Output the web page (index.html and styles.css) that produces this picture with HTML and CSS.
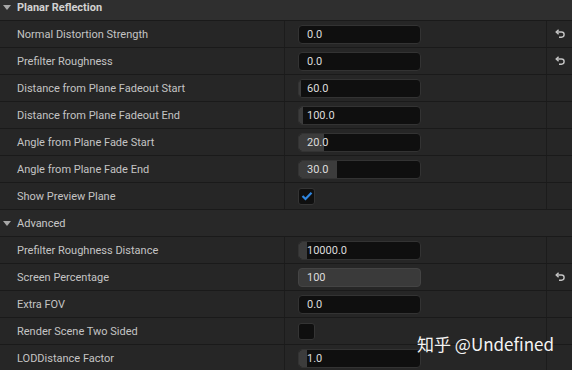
FILE: index.html
```html
<!DOCTYPE html>
<html lang="en">
<head>
  <meta charset="UTF-8">
  <title>Planar Reflection</title>
  <link rel="stylesheet" href="styles.css">
</head>
<body>
  <div class="panel">
    <div class="group main"><span class="arrow"></span>Planar Reflection</div>

    <div class="row">
      <div class="label">Normal Distortion Strength</div>
      <div class="value"><div class="field"><span>0.0</span></div></div>
      <div class="reset"><svg width="12" height="10" viewBox="0 0 12 10"><path d="M2.5 3H7.5A2.6 2.6 0 0 1 7.5 8.2H5" fill="none" stroke="#c4c4c4" stroke-width="1.4"/><path d="M4.6 0.8L2.2 3L4.6 5.2" fill="none" stroke="#c4c4c4" stroke-width="1.4"/></svg></div>
    </div>
    <div class="row">
      <div class="label">Prefilter Roughness</div>
      <div class="value"><div class="field"><span>0.0</span></div></div>
      <div class="reset"><svg width="12" height="10" viewBox="0 0 12 10"><path d="M2.5 3H7.5A2.6 2.6 0 0 1 7.5 8.2H5" fill="none" stroke="#c4c4c4" stroke-width="1.4"/><path d="M4.6 0.8L2.2 3L4.6 5.2" fill="none" stroke="#c4c4c4" stroke-width="1.4"/></svg></div>
    </div>
    <div class="row">
      <div class="label">Distance from Plane Fadeout Start</div>
      <div class="value"><div class="field"><div class="fill" style="width: 2px"></div><span>60.0</span></div></div>
      <div class="reset"></div>
    </div>
    <div class="row">
      <div class="label">Distance from Plane Fadeout End</div>
      <div class="value"><div class="field"><div class="fill" style="width: 4px"></div><span>100.0</span></div></div>
      <div class="reset"></div>
    </div>
    <div class="row">
      <div class="label">Angle from Plane Fade Start</div>
      <div class="value"><div class="field"><div class="fill" style="width: 25px"></div><span>20.0</span></div></div>
      <div class="reset"></div>
    </div>
    <div class="row">
      <div class="label">Angle from Plane Fade End</div>
      <div class="value"><div class="field"><div class="fill" style="width: 38px"></div><span>30.0</span></div></div>
      <div class="reset"></div>
    </div>
    <div class="row">
      <div class="label">Show Preview Plane</div>
      <div class="value"><div class="check"><svg width="12" height="10" viewBox="0 0 12 10"><path d="M1.5 5L4.5 8L10.5 1.8" fill="none" stroke="#2f86e0" stroke-width="2.2"/></svg></div></div>
      <div class="reset"></div>
    </div>

    <div class="group"><span class="arrow"></span>Advanced</div>

    <div class="row">
      <div class="label">Prefilter Roughness Distance</div>
      <div class="value"><div class="field"><div class="fill" style="width: 8px"></div><span>10000.0</span></div></div>
      <div class="reset"></div>
    </div>
    <div class="row">
      <div class="label">Screen Percentage</div>
      <div class="value"><div class="field full"><span>100</span></div></div>
      <div class="reset"><svg width="12" height="10" viewBox="0 0 12 10"><path d="M2.5 3H7.5A2.6 2.6 0 0 1 7.5 8.2H5" fill="none" stroke="#c4c4c4" stroke-width="1.4"/><path d="M4.6 0.8L2.2 3L4.6 5.2" fill="none" stroke="#c4c4c4" stroke-width="1.4"/></svg></div>
    </div>
    <div class="row">
      <div class="label">Extra FOV</div>
      <div class="value"><div class="field"><span>0.0</span></div></div>
      <div class="reset"></div>
    </div>
    <div class="row">
      <div class="label">Render Scene Two Sided</div>
      <div class="value"><div class="check"></div></div>
      <div class="reset"></div>
    </div>
    <div class="row">
      <div class="label">LODDistance Factor</div>
      <div class="value"><div class="field"><div class="fill" style="width: 8px"></div><span>1.0</span></div></div>
      <div class="reset"></div>
    </div>
  </div>

  <div class="watermark">知乎 @Undefined</div>
</body>
</html>
```

FILE: styles.css
```css
body {
  margin: 0;
  background: #242424;
  font-family: Roboto, "Noto Sans", sans-serif;
  font-size: 11px;
  color: #c4c4c4;
  overflow: hidden;
  position: relative;
  height: 370px;
}

.panel {
  display: flex;
  flex-direction: column;
  margin-top: -6px;
}

.group {
  height: 26px;
  border-bottom: 1px solid #1a1a1a;
  background: #282828;
  display: flex;
  align-items: center;
  padding-left: 17px;
  position: relative;
  color: #c8c8c8;
}

.group.main {
  background: #2f2f2f;
  font-weight: bold;
  color: #d2d2d2;
}

.arrow {
  position: absolute;
  left: 3px;
  top: 11px;
  width: 0;
  height: 0;
  border-left: 4px solid transparent;
  border-right: 4px solid transparent;
  border-top: 5px solid #a8a8a8;
}

.row {
  display: grid;
  grid-template-columns: 285px 262px 25px;
  height: 26px;
  border-bottom: 1px solid #1a1a1a;
  background: #262626;
}

.label {
  display: flex;
  align-items: center;
  padding-left: 17px;
  border-right: 1px solid #1c1c1c;
}

.value {
  display: flex;
  align-items: center;
  padding-left: 13px;
  border-right: 1px solid #1c1c1c;
}

.field {
  position: relative;
  width: 121px;
  height: 17px;
  background: #0f0f0f;
  border: 1px solid #333;
  border-radius: 4px;
  overflow: hidden;
  display: flex;
  align-items: center;
  color: #dcdcdc;
}

.field span {
  position: relative;
  padding-left: 8px;
}

.field.full {
  background: #3a3a3a;
  border-color: #444;
}

.fill {
  position: absolute;
  left: 0;
  top: 0;
  bottom: 0;
  background: #3c3c3c;
  border-radius: 3px 0 0 3px;
}

.check {
  width: 15px;
  height: 15px;
  background: #0f0f0f;
  border: 1px solid #343434;
  border-radius: 3px;
  display: flex;
  align-items: center;
  justify-content: center;
}

.reset {
  display: flex;
  align-items: center;
  justify-content: center;
}

.watermark {
  position: absolute;
  left: 417px;
  top: 331px;
  font-family: "Noto Sans CJK SC", "Noto Sans", sans-serif;
  font-size: 17px;
  color: #f4f4f4;
}
```
